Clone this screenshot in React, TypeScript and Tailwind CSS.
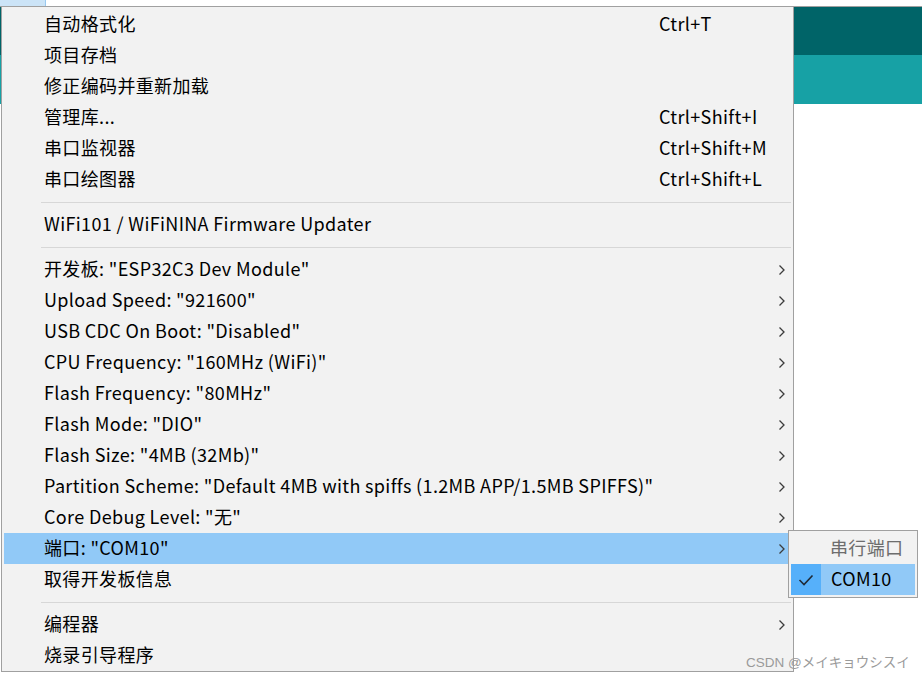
import React from 'react';

type Item =
  | { kind: 'sep' }
  | { kind: 'item'; label: string; shortcut?: string; sub?: boolean; active?: boolean };

const items: Item[] = [
  { kind: 'item', label: '自动格式化', shortcut: 'Ctrl+T' },
  { kind: 'item', label: '项目存档' },
  { kind: 'item', label: '修正编码并重新加载' },
  { kind: 'item', label: '管理库...', shortcut: 'Ctrl+Shift+I' },
  { kind: 'item', label: '串口监视器', shortcut: 'Ctrl+Shift+M' },
  { kind: 'item', label: '串口绘图器', shortcut: 'Ctrl+Shift+L' },
  { kind: 'sep' },
  { kind: 'item', label: 'WiFi101 / WiFiNINA Firmware Updater' },
  { kind: 'sep' },
  { kind: 'item', label: '开发板: "ESP32C3 Dev Module"', sub: true },
  { kind: 'item', label: 'Upload Speed: "921600"', sub: true },
  { kind: 'item', label: 'USB CDC On Boot: "Disabled"', sub: true },
  { kind: 'item', label: 'CPU Frequency: "160MHz (WiFi)"', sub: true },
  { kind: 'item', label: 'Flash Frequency: "80MHz"', sub: true },
  { kind: 'item', label: 'Flash Mode: "DIO"', sub: true },
  { kind: 'item', label: 'Flash Size: "4MB (32Mb)"', sub: true },
  { kind: 'item', label: 'Partition Scheme: "Default 4MB with spiffs (1.2MB APP/1.5MB SPIFFS)"', sub: true },
  { kind: 'item', label: 'Core Debug Level: "无"', sub: true },
  { kind: 'item', label: '端口: "COM10"', sub: true, active: true },
  { kind: 'item', label: '取得开发板信息' },
  { kind: 'sep' },
  { kind: 'item', label: '编程器', sub: true },
  { kind: 'item', label: '烧录引导程序' },
];

const Chevron = () => (
  <svg width="8" height="12" viewBox="0 0 8 12" className="shrink-0">
    <path d="M1.5 1.5 L6 6 L1.5 10.5" fill="none" stroke="#3c3c3c" strokeWidth="1.3" />
  </svg>
);

const Check = () => (
  <svg width="16" height="12" viewBox="0 0 16 12">
    <path d="M1.5 6 L6 10.5 L14.5 1.5" fill="none" stroke="#1f2a36" strokeWidth="1.6" />
  </svg>
);

const App = () => {
  return (
    <div
      className="relative h-[679px] w-[922px] overflow-hidden bg-white text-[18px] tracking-[0.35px] text-black"
      style={{ fontFamily: '"Noto Sans CJK SC", "Noto Sans", sans-serif' }}
    >
      {/* window behind the menu */}
      <div className="flex h-[6px]">
        <div className="h-full w-[46px] border-r border-[#99c9f0] bg-[#cce4f7]"></div>
      </div>
      <div className="h-px bg-[#a0a0a0]"></div>
      <div className="h-[48px] bg-[#006468]"></div>
      <div className="h-[49px] bg-[#17a1a5]"></div>

      {/* tools menu */}
      <div className="absolute left-[1px] top-[6px] w-[793px] border border-[#a0a0a0] bg-[#f2f2f2] pt-[2px]">
        {items.map((it, i) =>
          it.kind === 'sep' ? (
            <div key={i} className="flex h-[14px] items-center pl-[39px] pr-[2px]">
              <div className="h-px w-full bg-[#d7d7d7]"></div>
            </div>
          ) : (
            <div
              key={i}
              className={`ml-[2px] mr-[4px] flex h-[31px] items-center pb-[4px] pl-[40px] pr-[3px] leading-none ${
                it.active ? 'bg-[#91c9f7]' : ''
              }`}
            >
              <span className="w-[615px] shrink-0 whitespace-nowrap">{it.label}</span>
              <span className="whitespace-nowrap">{it.shortcut}</span>
              {it.sub && (
                <span className="ml-auto pt-[4px]">
                  <Chevron />
                </span>
              )}
            </div>
          )
        )}
      </div>

      {/* port submenu */}
      <div className="absolute left-[788px] top-[530px] w-[130px] border border-[#a0a0a0] bg-[#f2f2f2] py-[2px] pl-[2px] pr-[2px]">
        <div className="flex h-[31px] items-center pb-[4px] pl-[39px] leading-none text-[#6d6d6d]">串行端口</div>
        <div className="flex h-[31px] items-center bg-[#91c9f7] leading-none">
          <div className="flex h-full w-[30px] items-center justify-center bg-[#56b0fa]">
            <Check />
          </div>
          <span className="pb-[4px] pl-[10px]">COM10</span>
        </div>
      </div>

      {/* watermark */}
      <div
        className="absolute left-[746px] top-[656px] text-[13.5px] leading-none tracking-normal text-[#9a9a9a]"
        style={{ fontFamily: '"Liberation Sans", "Noto Sans CJK JP", sans-serif' }}
      >
        CSDN @メイキョウシスイ
      </div>
    </div>
  );
};

export default App;
